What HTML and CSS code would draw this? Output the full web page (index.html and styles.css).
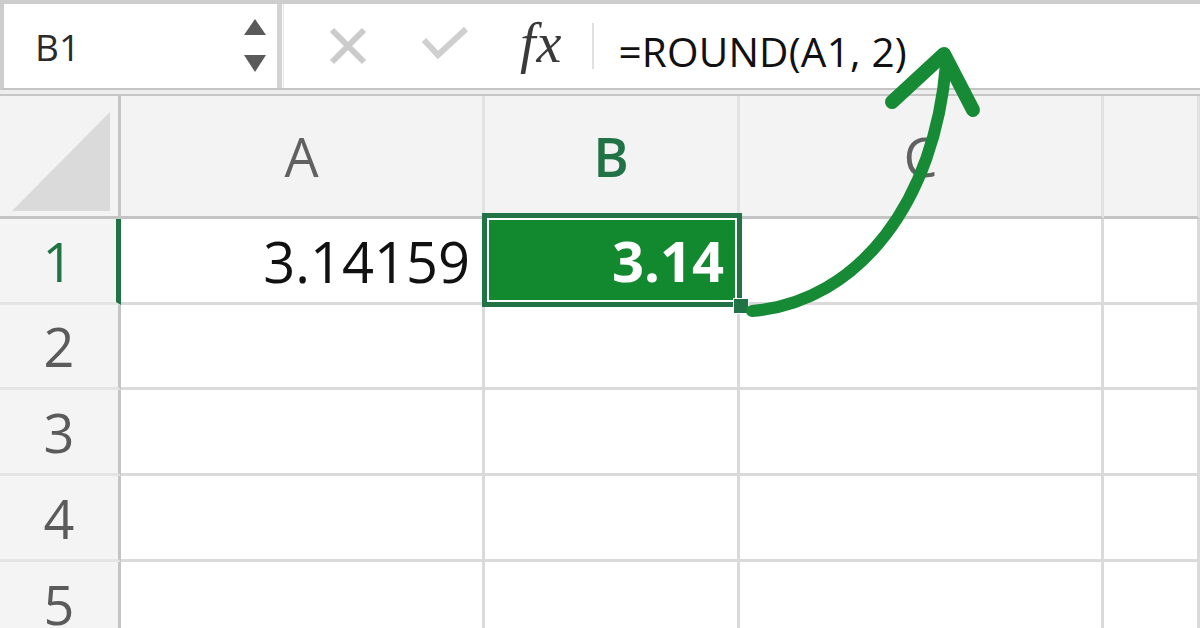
FILE: index.html
```html
<!DOCTYPE html>
<html lang="en">
<head>
  <meta charset="UTF-8">
  <title>ROUND in Excel</title>
  <link rel="stylesheet" href="styles.css">
</head>
<body>

  <div class="toolbar">
    <div class="namebox">
      <span class="cell-ref">B1</span>
      <div class="spin">
        <svg width="24" height="56" viewBox="0 0 24 56">
          <polygon points="1,17 23,17 12,1" fill="#5a5a5a"/>
          <polygon points="1,37 23,37 12,54" fill="#5a5a5a"/>
        </svg>
      </div>
    </div>
    <div class="formula-bar">
      <svg class="icon-x" width="40" height="40" viewBox="0 0 40 40">
        <path d="M4 4 L36 36 M36 4 L4 36" stroke="#cbcbcb" stroke-width="6"/>
      </svg>
      <svg class="icon-check" width="50" height="40" viewBox="0 0 50 40">
        <path d="M4 13 L18 28 L46 2" stroke="#cfcfcf" stroke-width="6" fill="none"/>
      </svg>
      <span class="fx">fx</span>
      <span class="sep"></span>
      <span class="formula">=ROUND(A1, 2)</span>
    </div>
  </div>
  <div class="divider"></div>

  <div class="sheet">
    <div class="corner">
      <svg width="98" height="99" viewBox="0 0 98 99">
        <polygon points="98,0 98,99 0,99" fill="#dadada"/>
      </svg>
    </div>
    <div class="col-head">A</div>
    <div class="col-head active">B</div>
    <div class="col-head">C</div>
    <div class="col-head"></div>

    <div class="row-head active">1</div>
    <div class="cell num">3.14159</div>
    <div class="cell selected">
      <div class="selection">
        <span>3.14</span>
        <div class="handle"></div>
      </div>
    </div>
    <div class="cell"></div>
    <div class="cell"></div>

    <div class="row-head">2</div>
    <div class="cell"></div>
    <div class="cell"></div>
    <div class="cell"></div>
    <div class="cell"></div>

    <div class="row-head">3</div>
    <div class="cell"></div>
    <div class="cell"></div>
    <div class="cell"></div>
    <div class="cell"></div>

    <div class="row-head">4</div>
    <div class="cell"></div>
    <div class="cell"></div>
    <div class="cell"></div>
    <div class="cell"></div>

    <div class="row-head">5</div>
    <div class="cell"></div>
    <div class="cell"></div>
    <div class="cell"></div>
    <div class="cell"></div>
  </div>

  <!-- hand drawn arrow from the cell up to the formula -->
  <svg class="arrow" width="1200" height="628" viewBox="0 0 1200 628">
    <path d="M752 311 C 860 302 935 200 946 64" stroke="#178a36" stroke-width="12" fill="none" stroke-linecap="round"/>
    <path d="M892 102 L944 54 L973 110" stroke="#178a36" stroke-width="14" fill="none" stroke-linecap="round" stroke-linejoin="round"/>
  </svg>

</body>
</html>
```

FILE: styles.css
```css
body {
  margin: 0;
  width: 1200px;
  height: 628px;
  overflow: hidden;
  position: relative;
  font-family: "Open Sans", Arial, sans-serif;
  background: white;
}

.toolbar {
  display: flex;
  height: 84px;
  border-top: 4px solid #cdcdcd;
  border-left: 4px solid #cdcdcd;
  border-bottom: 2px solid #c4c4c4;
  background: white;
}

.namebox {
  width: 278px;
  display: flex;
  align-items: center;
  border-right: 5px solid #d3d3d3;
  box-sizing: border-box;
}

.cell-ref {
  margin-left: 31px;
  font-size: 37px;
  color: #2b2b2b;
}

.spin {
  margin-left: auto;
  margin-right: 10px;
  display: flex;
}

.formula-bar {
  flex: 1;
  display: flex;
  align-items: center;
  border-left: 1px solid #e4e4e4;
  margin-left: 1px;
}

.icon-x {
  margin-left: 44px;
}

.icon-check {
  margin-left: 52px;
  margin-top: 2px;
}

.fx {
  margin-left: 50px;
  font-family: "Liberation Serif", serif;
  font-style: italic;
  font-size: 56px;
  color: #3a3a3a;
  margin-top: -6px;
  letter-spacing: 1px;
}

.sep {
  width: 2px;
  height: 46px;
  background: #e0e0e0;
  margin-left: 30px;
}

.formula {
  margin-left: 24px;
  padding-top: 10px;
  font-size: 40.5px;
  letter-spacing: 0.2px;
  color: #111;
}

.divider {
  height: 4px;
  background: #eeeeee;
  border-bottom: 2px solid #c6c6c6;
}

.sheet {
  display: grid;
  grid-template-columns: 121px 364px 255px 364px 1fr;
  grid-template-rows: 123px 86px 85px 86px 86px 86px;
}

.sheet > div {
  box-sizing: border-box;
  border-right: 3px solid #dadada;
  border-bottom: 3px solid #dadada;
}

.corner {
  background: #f3f3f3;
  display: flex;
  justify-content: flex-end;
  align-items: flex-end;
  padding: 0 8px 5px 0;
  border-right-color: #c4c4c4 !important;
  border-bottom-color: #c4c4c4 !important;
}

.col-head {
  background: #f3f3f3;
  border-bottom-color: #c4c4c4 !important;
  border-right-color: #e2e2e2 !important;
  display: flex;
  align-items: center;
  justify-content: center;
  font-size: 54px;
  color: #616161;
}

.col-head.active {
  color: #217346;
  font-weight: 600;
}

.row-head {
  background: #f4f4f4;
  border-right-color: #c4c4c4 !important;
  border-bottom-color: #e4e4e4 !important;
  display: flex;
  align-items: center;
  justify-content: center;
  font-size: 54px;
  color: #5b5b5b;
}

.row-head.active {
  color: #217346;
  border-right: 5px solid #217346 !important;
}

.cell {
  background: white;
}

.num {
  display: flex;
  align-items: center;
  justify-content: flex-end;
  padding-right: 12px;
  font-size: 56px;
  color: #111;
}

.selected {
  position: relative;
}

.selection {
  position: absolute;
  top: -6px;
  left: -3px;
  right: -5px;
  bottom: -5px;
  border: 5px solid #217346;
  box-shadow: inset 0 0 0 2px white;
  background: #12892e;
  display: flex;
  align-items: center;
  justify-content: flex-end;
  padding-right: 13px;
  color: white;
  font-size: 56px;
  font-weight: 700;
}

.handle {
  position: absolute;
  right: -12px;
  bottom: -12px;
  width: 14px;
  height: 14px;
  background: #217346;
  border: 1px solid white;
}

.arrow {
  position: absolute;
  top: 0;
  left: 0;
  pointer-events: none;
}
```
